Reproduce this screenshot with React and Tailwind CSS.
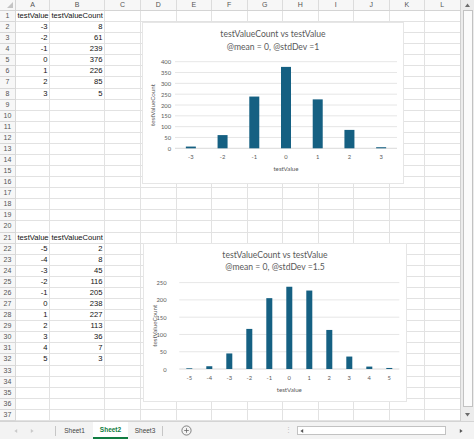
import React from "react";

const COLS = [
  { l: "A", c: "w-[34px]" },
  { l: "B", c: "w-[55px]" },
  { l: "C", c: "w-[36px]" },
  { l: "D", c: "w-[35.5px]" },
  { l: "E", c: "w-[35.5px]" },
  { l: "F", c: "w-[35.5px]" },
  { l: "G", c: "w-[35.5px]" },
  { l: "H", c: "w-[35.5px]" },
  { l: "I", c: "w-[35.5px]" },
  { l: "J", c: "w-[35.5px]" },
  { l: "K", c: "w-[35.5px]" },
  { l: "L", c: "w-[35.5px]" },
];

const DATA = {
  1: ["testValue", "testValueCount"],
  2: [-3, 8],
  3: [-2, 61],
  4: [-1, 239],
  5: [0, 376],
  6: [1, 226],
  7: [2, 85],
  8: [3, 5],
  21: ["testValue", "testValueCount"],
  22: [-5, 2],
  23: [-4, 8],
  24: [-3, 45],
  25: [-2, 116],
  26: [-1, 205],
  27: [0, 238],
  28: [1, 227],
  29: [2, 113],
  30: [3, 36],
  31: [4, 7],
  32: [5, 3],
};

const FONT = "Lato, 'Open Sans', 'Liberation Sans', sans-serif";

function BarChart({ w, h, subtitle, cats, values, max, step, x0, x1, zeroY, topY, barW, labelRight, yTitleX, t1, t2, xLabY, xTitY }) {
  const scale = (zeroY - topY) / max;
  const n = cats.length;
  const cw = (x1 - x0) / n;
  const ticks = [];
  for (let v = 0; v <= max; v += step) ticks.push(v);
  const midY = (zeroY + topY) / 2;
  return (
    <svg width={w} height={h} viewBox={`0 0 ${w} ${h}`} className="block" style={{ fontFamily: FONT }}>
      <text x={w / 2} y={t1} textAnchor="middle" dominantBaseline="central" fontSize="8.6" fill="#595959">
        testValueCount vs testValue
      </text>
      <text x={w / 2} y={t2} textAnchor="middle" dominantBaseline="central" fontSize="8.6" fill="#595959">
        {subtitle}
      </text>
      {ticks.map((v) => (
        <line key={"g" + v} x1={x0} x2={x1} y1={zeroY - v * scale} y2={zeroY - v * scale} stroke={v === 0 ? "#cfcfcf" : "#e0e0e0"} strokeWidth="0.8" />
      ))}
      {ticks.map((v) => (
        <text key={"t" + v} x={labelRight} y={zeroY - v * scale} textAnchor="end" dominantBaseline="central" fontSize="5.8" fill="#595959">
          {v}
        </text>
      ))}
      {values.map((v, i) => {
        const cx = x0 + (i + 0.5) * cw;
        const bh = v * scale;
        return <rect key={"b" + i} x={cx - barW / 2} y={zeroY - bh} width={barW} height={bh} fill="#156082" />;
      })}
      {cats.map((c, i) => (
        <text key={"c" + i} x={x0 + (i + 0.5) * cw} y={xLabY} textAnchor="middle" dominantBaseline="central" fontSize="5.8" fill="#595959">
          {c}
        </text>
      ))}
      <text x={(x0 + x1) / 2} y={xTitY} textAnchor="middle" dominantBaseline="central" fontSize="6.2" fill="#595959">
        testValue
      </text>
      <text
        x={yTitleX}
        y={midY}
        textAnchor="middle"
        dominantBaseline="central"
        fontSize="6.2"
        fill="#595959"
        transform={`rotate(-90 ${yTitleX} ${midY})`}
      >
        testValueCount
      </text>
    </svg>
  );
}

function Tri({ dir, color = "#7a7a7a", size = 5 }) {
  const pts = {
    up: "0,4 2.5,0.5 5,4",
    down: "0,1 2.5,4.5 5,1",
    left: "4,0 0.5,2.5 4,5",
    right: "1,0 4.5,2.5 1,5",
  }[dir];
  return (
    <svg width={size} height={size} viewBox="0 0 5 5" className="block">
      <polygon points={pts} fill={color} />
    </svg>
  );
}

function Sheet() {
  const rows = [];
  for (let r = 1; r <= 37; r++) rows.push(r);
  return (
    <div className="relative flex-1 h-full overflow-hidden bg-white" style={{ fontFamily: "'Liberation Sans', Arial, sans-serif" }}>
      <div className="flex h-[11px] bg-[#f7f7f7] border-b border-[#d4d4d4]">
        <div className="w-[16px] shrink-0 border-r border-[#d4d4d4] relative">
          <div className="absolute right-[2px] bottom-[2px] w-0 h-0 border-l-[6px] border-l-transparent border-b-[6px] border-b-[#c4c4c4]" />
        </div>
        {COLS.map((c) => (
          <div key={c.l} className={`${c.c} shrink-0 border-r border-[#dcdcdc] text-[7px] leading-[10px] text-center text-[#555]`}>
            {c.l}
          </div>
        ))}
      </div>
      {rows.map((r) => {
        const d = DATA[r];
        return (
          <div key={r} className="flex h-[11.08px]">
            <div className="w-[16px] shrink-0 bg-[#f7f7f7] border-r border-b border-[#d8d8d8] text-[7px] leading-[10px] text-center text-[#555]">
              {r}
            </div>
            {COLS.map((c, ci) => {
              let content = null;
              let align = "text-right";
              if (d && ci < 2) {
                content = d[ci];
                if (typeof content === "string") align = "text-left";
              }
              return (
                <div
                  key={c.l}
                  className={`${c.c} shrink-0 border-r border-b border-[#e2e2e2] text-[7.6px] leading-[10.5px] px-[1.5px] whitespace-nowrap overflow-visible text-[#111] ${align}`}
                >
                  {content}
                </div>
              );
            })}
          </div>
        );
      })}

      <div className="absolute left-[142px] top-[22px] w-[262px] h-[162px] bg-white border border-[#e6e6e6]">
        <BarChart
          w={260}
          h={160}
          subtitle="@mean = 0, @stdDev =1"
          cats={[-3, -2, -1, 0, 1, 2, 3]}
          values={[8, 61, 239, 376, 226, 85, 5]}
          max={400}
          step={50}
          x0={32}
          x1={254}
          zeroY={125.3}
          topY={38.7}
          barW={10}
          labelRight={28}
          yTitleX={9.5}
          t1={10.5}
          t2={23.7}
          xLabY={133.7}
          xTitY={145.3}
        />
      </div>

      <div className="absolute left-[143px] top-[243px] w-[264px] h-[159px] bg-white border border-[#e6e6e6]">
        <BarChart
          w={262}
          h={157}
          subtitle="@mean = 0, @stdDev =1.5"
          cats={[-5, -4, -3, -2, -1, 0, 1, 2, 3, 4, 5]}
          values={[2, 8, 45, 116, 205, 238, 227, 113, 36, 7, 3]}
          max={250}
          step={50}
          x0={35.3}
          x1={255.3}
          zeroY={125}
          topY={38.6}
          barW={6}
          labelRight={22.5}
          yTitleX={11}
          t1={11}
          t2={23.3}
          xLabY={133.7}
          xTitY={145.3}
        />
      </div>
    </div>
  );
}

function VScroll() {
  return (
    <div className="w-[14px] shrink-0 h-full bg-[#ececec] border-l border-[#d0d0d0] flex flex-col items-center">
      <div className="h-[10px] w-full flex items-center justify-center">
        <Tri dir="up" color="#6b6b6b" />
      </div>
      <div className="flex-1 w-[10px] border border-[#c2c2c2] bg-[#fbfbfb]" />
      <div className="h-[14px] w-full flex items-center justify-center">
        <Tri dir="down" color="#6b6b6b" />
      </div>
    </div>
  );
}

function TabBar() {
  return (
    <div className="flex-1 flex items-stretch bg-[#f3f3f3] border-t border-[#d4d4d4] text-[6.5px] text-[#444]" style={{ fontFamily: "'Liberation Sans', Arial, sans-serif" }}>
      <div className="w-[55px] shrink-0 flex items-center">
        <div className="ml-[14px]">
          <Tri dir="left" color="#c9c9c9" size={4} />
        </div>
        <div className="ml-[12px]">
          <Tri dir="right" color="#c9c9c9" size={4} />
        </div>
      </div>
      <div className="flex items-center">
        <div className="w-px h-[10px] bg-[#c6c6c6]" />
      </div>
      <div className="w-[37px] flex items-center justify-center">Sheet1</div>
      <div className="w-[35px] flex items-center justify-center bg-white border-b-2 border-[#107c41] text-[#107c41] font-bold">Sheet2</div>
      <div className="w-[34px] flex items-center justify-center">Sheet3</div>
      <div className="flex items-center">
        <div className="w-px h-[10px] bg-[#c6c6c6]" />
      </div>
      <div className="ml-[18px] flex items-center">
        <svg width="11" height="11" viewBox="0 0 11 11" className="block">
          <circle cx="5.5" cy="5.5" r="4.6" fill="none" stroke="#666" strokeWidth="0.8" />
          <path d="M5.5 3.2 V7.8 M3.2 5.5 H7.8" stroke="#666" strokeWidth="0.8" />
        </svg>
      </div>
      <div className="ml-[93px] flex items-center text-[#bdbdbd] text-[7px]">⋮</div>
      <div className="ml-[5px] flex items-center">
        <div className="w-[149px] h-[9px] border border-[#c2c2c2] bg-white flex items-center pl-[2px]">
          <Tri dir="left" color="#555" size={4} />
        </div>
        <div className="w-[20px] h-[9px] flex items-center justify-end pr-[3px]">
          <Tri dir="right" color="#555" size={4} />
        </div>
      </div>
    </div>
  );
}

export default function App() {
  return (
    <div className="w-[474px] h-[439px] flex flex-col bg-white overflow-hidden">
      <div className="flex h-[421px] shrink-0">
        <Sheet />
        <VScroll />
      </div>
      <TabBar />
    </div>
  );
}
